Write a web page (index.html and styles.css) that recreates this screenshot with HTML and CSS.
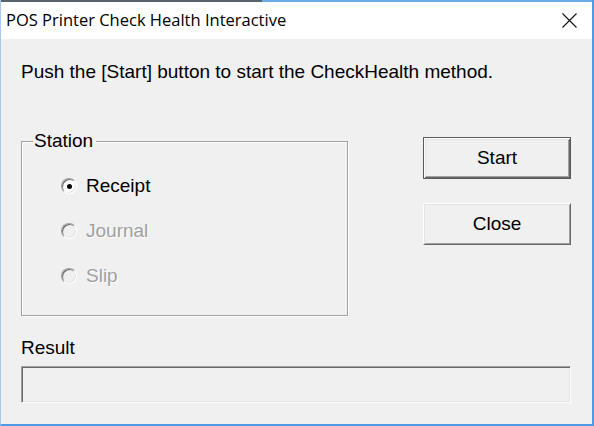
FILE: index.html
```html
<!DOCTYPE html>
<html lang="en">
<head>
<meta charset="utf-8">
<title>POS Printer Check Health Interactive</title>
<link rel="stylesheet" href="styles.css">
</head>
<body>
<div class="window">
  <div class="top-strip"><span class="strip-dark"></span><span class="strip-blue"></span></div>
  <div class="titlebar">
    <span class="title">POS Printer Check Health Interactive</span>
    <span class="close-x" aria-label="Close">
      <svg width="15" height="15" viewBox="0 0 15 15"><path d="M0.5 0.5 L14.5 14.5 M14.5 0.5 L0.5 14.5" stroke="#111" stroke-width="1.1" fill="none"/></svg>
    </span>
  </div>
  <div class="content">
    <p class="instruction">Push the [Start] button to start the CheckHealth method.</p>
    <div class="main">
      <fieldset class="group">
        <legend class="legend">Station</legend>
        <div class="options">
          <div class="option"><span class="radio checked"><span class="dot"></span></span><span class="label">Receipt</span></div>
          <div class="option disabled"><span class="radio"></span><span class="label">Journal</span></div>
          <div class="option disabled"><span class="radio"></span><span class="label">Slip</span></div>
        </div>
      </fieldset>
      <div class="buttons">
        <div class="btn default">Start</div>
        <div class="btn">Close</div>
      </div>
    </div>
    <div class="result-label">Result</div>
    <div class="result-field"></div>
  </div>
</div>
</body>
</html>
```
FILE: styles.css
```css
html, body {
  margin: 0;
  padding: 0;
  background: #f0f0f0;
}
.window {
  width: 594px;
  height: 426px;
  box-sizing: border-box;
  border-left: 1px solid #a9c9ec;
  border-right: 2px solid #4f9be3;
  border-bottom: 2px solid #4f9be3;
  background: #f0f0f0;
  font-family: "Liberation Sans", Arial, sans-serif;
  font-size: 19px;
  line-height: 22px;
  color: #000;
  overflow: hidden;
}
.top-strip {
  display: flex;
  height: 2px;
  margin-left: -1px;
  margin-right: -2px;
}
.strip-dark {
  width: 262px;
  background: #58626d;
}
.strip-blue {
  flex: 1;
  background: #6aaae6;
}
.titlebar {
  height: 37px;
  background: #fff;
  display: flex;
  align-items: center;
  justify-content: space-between;
  padding: 0 15px 2px 5px;
  box-sizing: border-box;
}
.title {
  font-family: "Open Sans", "Noto Sans", sans-serif;
  font-size: 16.5px;
  line-height: 20px;
  color: #000;
}
.close-x {
  display: flex;
  width: 15px;
  height: 15px;
  margin-top: 1px;
}
.content {
  padding: 22px 21px 0 20px;
}
.instruction {
  margin: 0;
  height: 22px;
}
.main {
  display: flex;
  justify-content: space-between;
  align-items: flex-start;
  margin-top: 47px;
}
.group {
  margin: 0;
  padding: 0;
  width: 327px;
  box-sizing: border-box;
  border: 1px solid #a0a0a0;
  box-shadow: inset 1px 1px #fff, 1px 1px #fff;
}
.legend {
  margin-left: 11px;
  padding: 0 3px 0 1px;
  background: #f0f0f0;
  line-height: 22px;
}
.options {
  display: flex;
  flex-direction: column;
  gap: 23px;
  padding: 23px 0 28px 39px;
}
.option {
  display: flex;
  align-items: center;
  height: 22px;
  gap: 9px;
}
.radio {
  position: relative;
  width: 16px;
  height: 16px;
  box-sizing: border-box;
  border-radius: 50%;
  border: 1px solid;
  border-color: #a0a0a0 #fff #fff #a0a0a0;
  background: #fff;
  box-shadow: inset 1px 1px #696969, inset -1px -1px #e3e3e3;
}
.option.disabled .radio {
  background: #f0f0f0;
}
.dot {
  position: absolute;
  left: 4.5px;
  top: 4.5px;
  width: 5px;
  height: 5px;
  border-radius: 50%;
  background: #000;
}
.option.disabled .label {
  color: #a0a0a0;
  text-shadow: 1px 1px #fff;
}
.buttons {
  display: flex;
  flex-direction: column;
  gap: 24px;
  margin-top: 7px;
  width: 148px;
}
.btn {
  height: 42px;
  box-sizing: border-box;
  display: flex;
  align-items: center;
  justify-content: center;
  background: #f0f0f0;
  border: 1px solid;
  border-color: #fff #696969 #696969 #fff;
  box-shadow: inset 1px 1px #e3e3e3, inset -1px -1px #a0a0a0;
}
.btn.default {
  border: 1px solid #5a5a5a;
  box-shadow: inset 1px 1px #fff, inset -1px -1px #696969, inset 2px 2px #e3e3e3, inset -2px -2px #a0a0a0;
}
.result-label {
  margin-top: 21px;
  height: 22px;
}
.result-field {
  margin-top: 7px;
  height: 37px;
  box-sizing: border-box;
  border: 1px solid;
  border-color: #a0a0a0 #fff #fff #a0a0a0;
  box-shadow: inset 1px 1px #696969, inset -1px -1px #e3e3e3;
  background: #f0f0f0;
}
```
